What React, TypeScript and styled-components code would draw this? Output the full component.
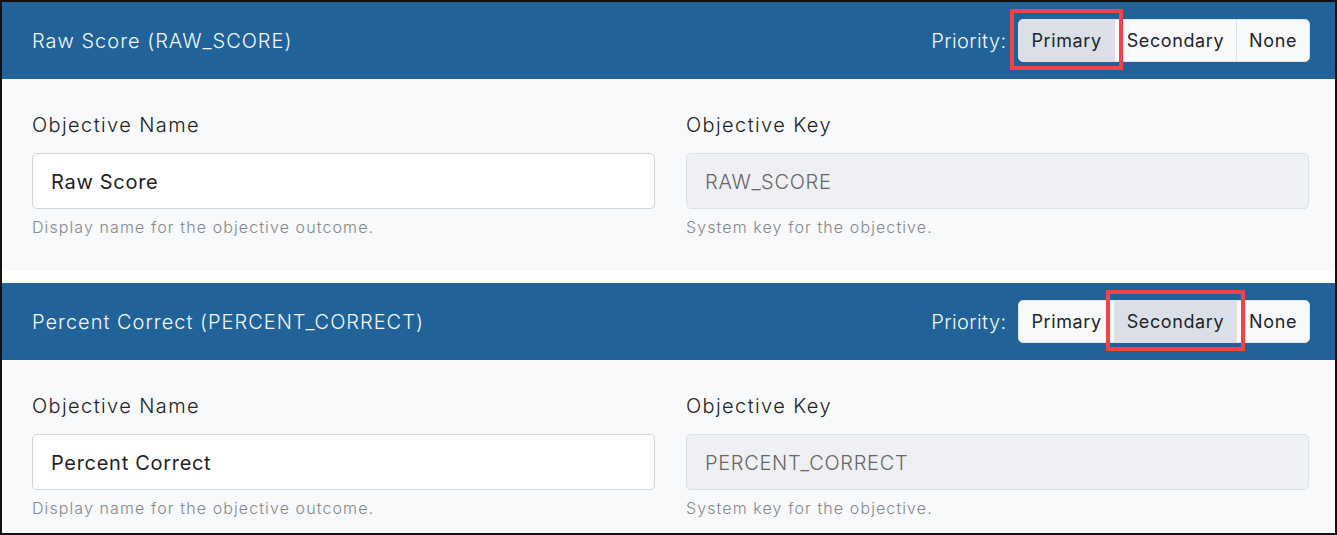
import React from 'react';
import styled, { createGlobalStyle } from 'styled-components';

const GlobalStyle = createGlobalStyle`
  html, body {
    margin: 0;
    padding: 0;
    background: #fff;
  }
  body {
    font-family: Inter, "Noto Sans", sans-serif;
  }
`;

type Priority = 'Primary' | 'Secondary' | 'None';

interface Objective {
  name: string;
  key: string;
  priority: Priority;
}

const objectives: Objective[] = [
  { name: 'Raw Score', key: 'RAW_SCORE', priority: 'Primary' },
  { name: 'Percent Correct', key: 'PERCENT_CORRECT', priority: 'Secondary' },
];

const priorities: Priority[] = ['Primary', 'Secondary', 'None'];

const App = () => (
  <>
    <GlobalStyle />
    <Frame>
      {objectives.map(o => (
        <Card key={o.key}>
          <Header>
            <Title>
              {o.name} ({o.key})
            </Title>
            <PriorityBox>
              <PriorityLabel>Priority:</PriorityLabel>
              <ButtonGroup>
                {priorities.map(p => (
                  <GroupButton key={p} active={p === o.priority}>
                    {p}
                    {p === o.priority && <Highlight />}
                  </GroupButton>
                ))}
              </ButtonGroup>
            </PriorityBox>
          </Header>
          <Body>
            <Field>
              <Label>Objective Name</Label>
              <Input defaultValue={o.name} />
              <Help>Display name for the objective outcome.</Help>
            </Field>
            <Field>
              <Label>Objective Key</Label>
              <Input defaultValue={o.key} disabled />
              <Help>System key for the objective.</Help>
            </Field>
          </Body>
        </Card>
      ))}
    </Frame>
  </>
);

const Frame = styled.div`
  box-sizing: border-box;
  width: 1337px;
  height: 535px;
  overflow: hidden;
  border: 2px solid #111;
  display: flex;
  flex-direction: column;
  gap: 12px;
  background: #fff;
`;

const Card = styled.section`
  display: flex;
  flex-direction: column;
  flex-shrink: 0;
`;

const Header = styled.div`
  height: 77px;
  background: #216399;
  display: flex;
  align-items: center;
  justify-content: space-between;
  padding: 0 25px 0 30px;
`;

const Title = styled.h3`
  margin: 0;
  font-size: 20px;
  font-weight: 300;
  color: #f4f7fa;
  letter-spacing: 1px;
`;

const PriorityBox = styled.div`
  display: flex;
  align-items: center;
  gap: 12px;
`;

const PriorityLabel = styled.span`
  font-size: 20px;
  font-weight: 300;
  color: #f4f7fa;
  letter-spacing: 0.4px;
`;

const ButtonGroup = styled.div`
  display: flex;
  height: 41px;
  border-radius: 5px;
  background: #f8f9fa;
  border: 1px solid #dee2e6;
`;

const GroupButton = styled.button<{ active: boolean }>`
  position: relative;
  font-family: inherit;
  font-size: 18px;
  font-weight: 400;
  color: #212529;
  padding: 0 12px;
  border: none;
  border-right: 1px solid #dee2e6;
  background: ${p => (p.active ? '#dbe0e8' : 'transparent')};
  cursor: pointer;
  letter-spacing: 0.6px;
  &:first-child {
    border-radius: 4px 0 0 4px;
  }
  &:last-child {
    border-right: none;
    border-radius: 0 4px 4px 0;
  }
`;

const Highlight = styled.span`
  position: absolute;
  top: -11px;
  bottom: -9px;
  left: -9px;
  right: -9px;
  border: 4px solid #f2434a;
  pointer-events: none;
`;

const Body = styled.div`
  background: #f8f9fa;
  display: grid;
  grid-template-columns: 1fr 1fr;
  column-gap: 31px;
  padding: 32px 26px 32px 30px;
`;

const Field = styled.div`
  display: flex;
  flex-direction: column;
`;

const Label = styled.label`
  font-size: 20px;
  font-weight: 300;
  line-height: 28px;
  color: #222;
  margin-bottom: 14px;
  letter-spacing: 1.4px;
`;

const Input = styled.input`
  box-sizing: border-box;
  height: 56px;
  width: 100%;
  padding: 1px 18px 0;
  font-family: inherit;
  font-size: 20px;
  font-weight: 400;
  color: #1f1f1f;
  background: #fff;
  border: 1px solid #ced4da;
  border-radius: 5px;
  outline: none;
  letter-spacing: 0.7px;
  &:disabled {
    background: #eff0f3;
    color: #666;
    border-color: #dcdfe3;
    font-weight: 300;
  }
`;

const Help = styled.small`
  margin-top: 6px;
  font-size: 16px;
  font-weight: 300;
  line-height: 24px;
  color: #85888c;
  letter-spacing: 1.1px;
`;

export default App;
